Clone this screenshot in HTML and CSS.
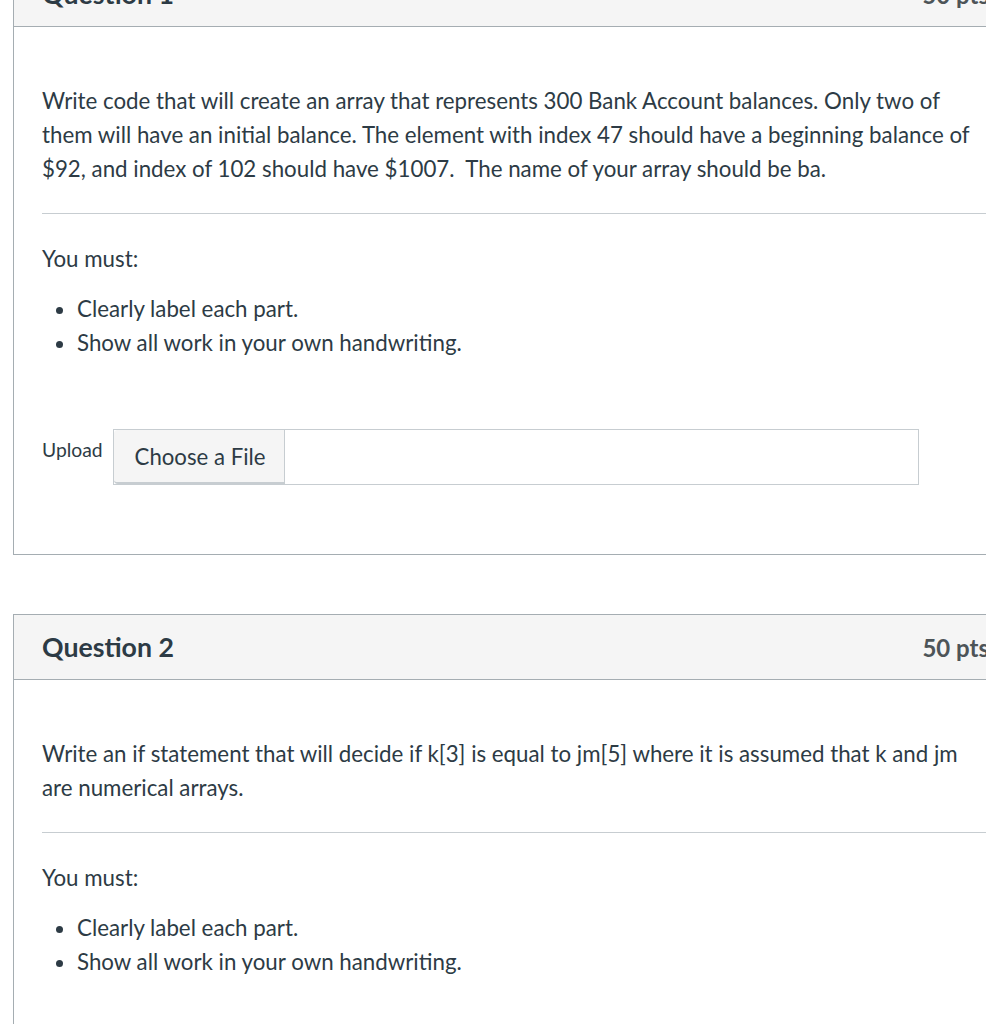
FILE: index.html
```html
<!DOCTYPE html>
<html>
<head>
<meta charset="utf-8">
<link rel="stylesheet" href="styles.css">
</head>
<body>
<div class="page">
  <div class="question">
    <div class="q-header">
      <span class="q-title">Question 1</span>
      <span class="q-pts">50 pts</span>
    </div>
    <div class="q-body">
      <p class="q-text">Write code that will create an array that represents 300 Bank Account balances. Only two of them will have an initial balance. The element with index 47 should have a beginning balance of $92, and index of 102 should have $1007.&nbsp; The name of your array should be ba.</p>
      <hr class="divider">
      <p class="must">You must:</p>
      <ul class="reqs">
        <li>Clearly label each part.</li>
        <li>Show all work in your own handwriting.</li>
      </ul>
      <div class="upload">
        <span class="upload-label">Upload</span>
        <div class="file-field">
          <span class="file-btn">Choose a File</span>
        </div>
      </div>
    </div>
  </div>

  <div class="question">
    <div class="q-header">
      <span class="q-title">Question 2</span>
      <span class="q-pts">50 pts</span>
    </div>
    <div class="q-body q-body-last">
      <p class="q-text">Write an if statement that will decide if k[3] is equal to jm[5] where it is assumed that k and jm are numerical arrays.</p>
      <hr class="divider">
      <p class="must">You must:</p>
      <ul class="reqs">
        <li>Clearly label each part.</li>
        <li>Show all work in your own handwriting.</li>
      </ul>
    </div>
  </div>
</div>
</body>
</html>
```

FILE: styles.css
```css
html, body {
  margin: 0;
  padding: 0;
  background: #fff;
  overflow: hidden;
}
body {
  font-family: Lato, "Liberation Sans", sans-serif;
  color: #2d3b45;
}
.page {
  margin-top: -39px;
  padding-left: 13px;
  width: 992px;
  display: flex;
  flex-direction: column;
  gap: 59px;
}
.question {
  border: 1px solid #a5adb2;
  background: #fff;
}
.q-header {
  background: #f5f5f5;
  border-bottom: 1px solid #a5adb2;
  height: 64px;
  display: flex;
  align-items: center;
  justify-content: space-between;
  padding: 0 15px 0 28px;
}
.q-title {
  font-size: 26.7px;
  font-weight: 700;
  color: #2d3b45;
}
.q-pts {
  font-size: 24px;
  font-weight: 700;
  color: #4d5458;
}
.q-body {
  padding: 57px 0 0 28px;
}
.q-body-last {
  padding-bottom: 120px;
}
.q-text {
  margin: 0;
  font-size: 22.3px;
  line-height: 34px;
  padding-right: 16px;
}
.divider {
  border: 0;
  border-top: 1px solid #c7cdd1;
  margin: 27px 0 0 0;
}
.must {
  margin: 28px 0 0 0;
  font-size: 22.3px;
  line-height: 34px;
}
.reqs {
  margin: 16px 0 0 0;
  padding-left: 35px;
  font-size: 22.3px;
  line-height: 34px;
}
.upload {
  display: flex;
  align-items: flex-start;
  gap: 10px;
  margin-top: 69px;
  margin-bottom: 69px;
}
.upload-label {
  font-size: 19.3px;
  line-height: 22px;
  margin-top: 10px;
}
.file-field {
  width: 804px;
  height: 54px;
  border: 1px solid #c7cdd1;
  display: flex;
  background: #fff;
}
.file-btn {
  display: flex;
  align-items: center;
  flex-shrink: 0;
  white-space: nowrap;
  width: 171px;
  box-sizing: border-box;
  padding: 0 0 0 21px;
  background: #f5f5f5;
  border-right: 1px solid #c7cdd1;
  border-bottom: 2px solid #c7cdd1;
  border-radius: 4px 0 0 4px;
  font-size: 22.2px;
  color: #2d3b45;
}
```
